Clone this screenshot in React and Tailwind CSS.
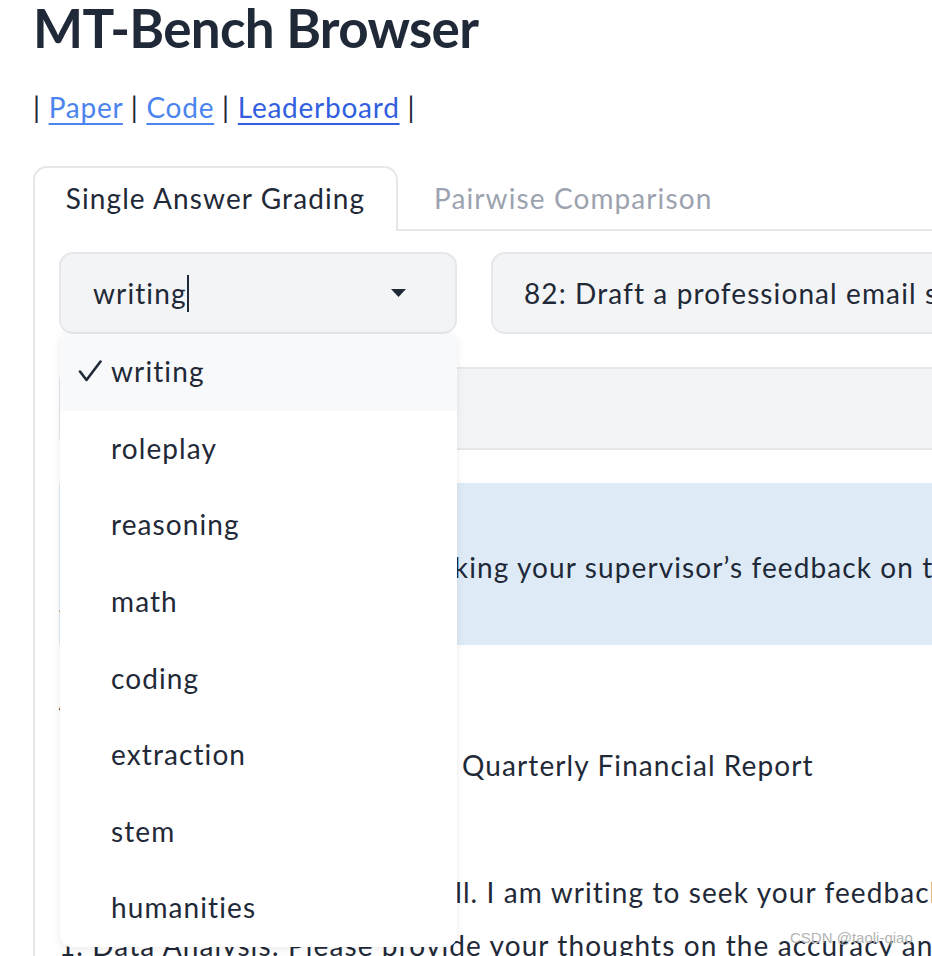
import React from "react";

const items = ["writing", "roleplay", "reasoning", "math", "coding", "extraction", "stem", "humanities"];

function Check() {
  return (
    <svg width="24" height="22" viewBox="0 0 24 22" fill="none">
      <path d="M2 11.5 L8.5 20 L22.5 1.5" stroke="#1f2937" strokeWidth="2.6" strokeLinecap="round" strokeLinejoin="round" />
    </svg>
  );
}

function Arrow() {
  return (
    <svg width="15" height="8" viewBox="0 0 15 8">
      <path d="M0 0 H15 L7.5 8 Z" fill="#1f2937" />
    </svg>
  );
}

export default function App() {
  return (
    <div className="relative h-[956px] w-full overflow-hidden whitespace-nowrap bg-white font-['Lato','Noto_Sans',sans-serif] tracking-[1.1px] text-[#1f2937]">
      <div className="w-[2400px] pl-[33px]">
        <h1 className="mt-[1px] text-[53px] font-bold leading-[53px] tracking-[-0.7px]">MT-Bench Browser</h1>
        <div className="mt-[32px] text-[28px] leading-[42px] tracking-[0.75px]">
          <span>| </span>
          <a className="text-[#4b84ee] underline underline-offset-[5px]" href="#">Paper</a>
          <span> | </span>
          <a className="text-[#4b84ee] underline underline-offset-[5px]" href="#">Code</a>
          <span> | </span>
          <a className="text-[#315fe0] underline underline-offset-[5px]" href="#">Leaderboard</a>
          <span> |</span>
        </div>

        {/* tabs */}
        <div className="mt-[38px] flex items-end">
          <div className="flex h-[65px] w-[365px] justify-center rounded-t-[14px] border-2 border-b-0 border-[#e5e7eb] bg-white pt-[9px] text-[28px] leading-[42px]">
            Single Answer Grading
          </div>
          <div className="flex h-[65px] flex-1 border-b-2 border-[#e5e7eb] pl-[36px] pt-[11px] text-[28px] leading-[42px] text-[#9ca3af]">
            Pairwise Comparison
          </div>
        </div>

        {/* panel */}
        <div className="border-l-2 border-[#e5e7eb] pl-[24px] pt-[21px]">
          <div className="flex gap-[34px]">
            <div className="flex h-[82px] w-[398px] shrink-0 items-center justify-between rounded-[14px] border-2 border-[#e5e7eb] bg-[#f3f4f6] pl-[32px] pr-[49px] text-[28px]">
              <span className="flex items-center">
                writing
                <span className="inline-block h-[37px] w-[2px] bg-[#1f2937]" />
              </span>
              <Arrow />
            </div>
            <div className="flex h-[82px] flex-1 items-center rounded-[14px] border-2 border-[#e5e7eb] bg-[#f3f4f6] pl-[31px] text-[28px]">
              82: Draft a professional email seeking your supervisor's feedback on the 'Quarterly Financial Report' you prepared.
            </div>
          </div>

          <div className="mt-[33px] flex h-[83px] items-center rounded-[14px] border-2 border-[#e5e7eb] bg-[#f3f4f6] pl-[32px] text-[28px]">
            Llama-2-13b-chat
          </div>

          <div className="mt-[33px] h-[162px] bg-[#deebf7] pt-[14px] text-[28px]">
            <div className="text-[26px] font-bold leading-[42px]">User</div>
            <div className="mt-[5px] leading-[47px]">
              Draft a professional email seeking your supervisor’s feedback on the ‘Quarterly Financial Report’ you prepared. Ask specifically about the data analysis, presentation style, and the clarity of conclusions drawn. Keep the email short and
              <br />
              to the point.
            </div>
          </div>

          <div className="text-[28px] leading-[42px]">
            <div className="mt-[34px] text-[26px] font-bold">Assistant A</div>
            <div className="mt-[23px]">Subject: Seeking Feedback on Quarterly Financial Report</div>
            <div className="mt-[23px]">Dear [Supervisor’s Name],</div>
            <div className="mt-[20px]">I hope this email finds you well. I am writing to seek your feedback on the Quarterly Financial Report that I prepared.</div>
            <div className="mt-[11px]">1. Data Analysis: Please provide your thoughts on the accuracy and thoroughness of the data analysis presented in the report.</div>
          </div>
        </div>
      </div>

      {/* dropdown list overlay */}
      <div className="absolute left-[60px] top-[334px] w-[397px] overflow-hidden rounded-b-[12px] rounded-t-[6px] bg-white shadow-[0_2px_8px_rgba(0,0,0,0.08)]">
        {items.map((it, i) => (
          <div
            key={it}
            className={
              "relative flex h-[76.6px] items-center pb-[2px] pl-[51px] text-[28px] " +
              (i === 0 ? "bg-[#f8f9fb]" : "bg-white")
            }
          >
            {i === 0 && (
              <span className="absolute left-[18px] top-[26px]">
                <Check />
              </span>
            )}
            {it}
          </div>
        ))}
      </div>

      <div className="absolute left-[790px] top-[928px] font-['Liberation_Sans',sans-serif] text-[15px] leading-[20px] tracking-[0px] text-[#b4b4b4]">
        CSDN @taoli-qiao
      </div>
    </div>
  );
}
